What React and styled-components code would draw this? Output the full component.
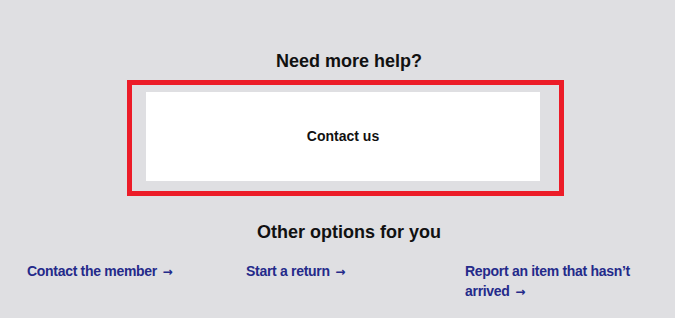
import React from 'react';
import styled, {createGlobalStyle} from 'styled-components';

const GlobalStyle = createGlobalStyle`
  html, body {
    margin: 0;
    padding: 0;
    background: #dfdfe2;
    font-family: "Liberation Sans", Arial, sans-serif;
  }
`;

const options = [
    {id: 'member', label: 'Contact the member'},
    {id: 'return', label: 'Start a return'},
    {id: 'missing', label: 'Report an item that hasn\u2019t arrived'},
];

export default function App() {
    return (
        <Page>
            <GlobalStyle/>
            <HelpSection>
                <Heading>Need more help?</Heading>
                <Highlight>
                    <ContactCard>Contact us</ContactCard>
                </Highlight>
            </HelpSection>
            <OptionsSection>
                <Heading $shift={0}>Other options for you</Heading>
                <OptionsGrid>
                    {options.map(item => (
                        <OptionLink key={item.id} href="#">
                            {item.label}{' '}<Arrow>{'\u2192'}</Arrow>
                        </OptionLink>
                    ))}
                </OptionsGrid>
            </OptionsSection>
        </Page>
    );
}

const Page = styled.div`
  width: 100%;
  min-height: 318px;
  padding-top: 49px;
  box-sizing: border-box;
  background: #dfdfe2;
`;

const HelpSection = styled.section`
  display: flex;
  flex-direction: column;
  align-items: center;
  padding-left: 16px;
`;

const Heading = styled.h2`
  margin: 0;
  padding-left: ${props => props.$shift ?? 7}px;
  font-size: 18px;
  line-height: 24px;
  font-weight: 700;
  color: #111111;
  text-align: center;
`;

const Highlight = styled.div`
  margin-top: 7px;
  width: 437px;
  box-sizing: border-box;
  border: 5px solid #ec1c28;
  padding: 7px 19px 10px 14px;
`;

const ContactCard = styled.div`
  height: 89px;
  padding-bottom: 2px;
  box-sizing: border-box;
  background: #ffffff;
  display: flex;
  align-items: center;
  justify-content: center;
  font-size: 14px;
  font-weight: 700;
  color: #111111;
`;

const OptionsSection = styled.section`
  margin-top: 24px;
  display: flex;
  flex-direction: column;
  align-items: center;
  padding-left: 23px;
`;

const OptionsGrid = styled.div`
  margin-top: 17px;
  margin-left: -23px;
  align-self: stretch;
  display: grid;
  grid-template-columns: repeat(3, 1fr);
  column-gap: 36px;
  padding: 0 27px;
`;

const OptionLink = styled.a`
  font-size: 14px;
  line-height: 20px;
  font-weight: 700;
  letter-spacing: -0.3px;
  color: #242a8a;
  text-decoration: none;
`;

const Arrow = styled.span`
  display: inline-block;
  margin-left: 2px;
  font-family: "DejaVu Sans", sans-serif;
  font-size: 12px;
  font-weight: 700;
  letter-spacing: 0;
`;
